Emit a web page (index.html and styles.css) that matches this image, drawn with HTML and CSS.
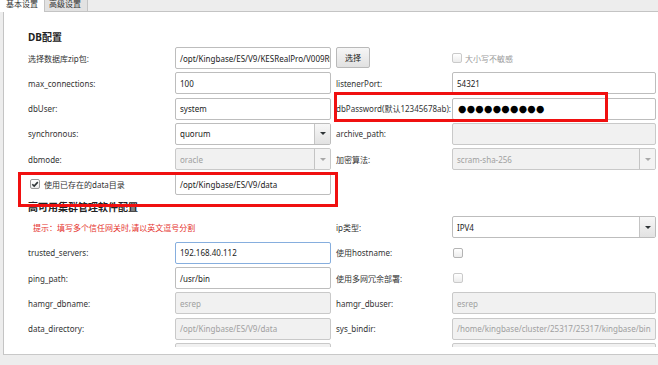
FILE: index.html
```html
<!DOCTYPE html>
<html lang="zh-CN">
<head>
<meta charset="utf-8">
<title>设置</title>
<link rel="stylesheet" href="styles.css">
</head>
<body>
<div class="window">
  <div class="tabs">
    <div class="tab active"><span>基本设置</span></div>
    <div class="tab"><span>高级设置</span></div>
    <div class="tab-fill"></div>
  </div>
  <div class="panel">
    <div class="scroll">
      <div class="section-title first">DB配置</div>
      <div class="form">
        <div class="lbl">选择数据库zip包:</div>
        <div class="field">/opt/Kingbase/ES/V9/KESRealPro/V009R001C002B0014/KingbaseES_V009R001C002B0014_Lin64_install.zip</div>
        <div class="cell2"><button class="pbtn">选择</button></div>
        <div class="chkcell disabled"><span class="chk"></span><span>大小写不敏感</span></div>

        <div class="lbl">max_connections:</div>
        <div class="field">100</div>
        <div class="lbl lbl2">listenerPort:</div>
        <div class="field">54321</div>

        <div class="lbl">dbUser:</div>
        <div class="field">system</div>
        <div class="lbl lbl2">dbPassword(默认12345678ab):</div>
        <div class="field pwd">●●●●●●●●●●</div>

        <div class="lbl">synchronous:</div>
        <div class="select"><span class="val">quorum</span><span class="arrow"></span></div>
        <div class="lbl lbl2">archive_path:</div>
        <div class="field off"></div>

        <div class="lbl">dbmode:</div>
        <div class="select off"><span class="val">oracle</span><span class="arrow"></span></div>
        <div class="lbl lbl2">加密算法:</div>
        <div class="select off"><span class="val">scram-sha-256</span><span class="arrow"></span></div>

        <div class="lbl chklbl"><span class="chk on"><svg viewBox="0 0 10 10" width="10" height="10"><path d="M2.3 5.2 L4.2 7.1 L7.8 3.1" fill="none" stroke="#2e3436" stroke-width="1.6"/></svg></span><span>使用已存在的data目录</span></div>
        <div class="field">/opt/Kingbase/ES/V9/data</div>
        <div></div>
        <div></div>
      </div>

      <div class="section-title second">高可用集群管理软件配置</div>
      <div class="form">
        <div class="hint">提示：填写多个信任网关时,请以英文逗号分割</div>
        <div class="lbl lbl2">ip类型:</div>
        <div class="select"><span class="val">IPV4</span><span class="arrow"></span></div>

        <div class="lbl">trusted_servers:</div>
        <div class="field focus">192.168.40.112</div>
        <div class="lbl lbl2">使用hostname:</div>
        <div class="chkcell"><span class="chk shift"></span></div>

        <div class="lbl">ping_path:</div>
        <div class="field">/usr/bin</div>
        <div class="lbl lbl2">使用多网冗余部署:</div>
        <div class="chkcell"><span class="chk shift faint"></span></div>

        <div class="lbl">hamgr_dbname:</div>
        <div class="field off">esrep</div>
        <div class="lbl lbl2">hamgr_dbuser:</div>
        <div class="field off">esrep</div>

        <div class="lbl">data_directory:</div>
        <div class="field off">/opt/Kingbase/ES/V9/data</div>
        <div class="lbl lbl2">sys_bindir:</div>
        <div class="field off">/home/kingbase/cluster/25317/25317/kingbase/bin</div>

        <div class="lbl">log_path:</div>
        <div class="field off"></div>
        <div class="lbl lbl2">virtual_ip:</div>
        <div class="field off"></div>
      </div>
    </div>
    <div class="mark mark-pwd"></div>
    <div class="mark mark-data"></div>
  </div>
  <div class="strip"></div>
</div>
</body>
</html>
```

FILE: styles.css
```css
* { box-sizing: border-box; }
html, body { margin: 0; padding: 0; }
body {
  width: 658px;
  height: 365px;
  overflow: hidden;
  background: #ededed;
  font-family: "Noto Sans", "Noto Sans CJK SC", sans-serif;
  font-size: 8px;
  color: #333;
}
.window { width: 658px; height: 365px; overflow: hidden; }

/* tabs */
.tabs { display: flex; height: 12px; }
.tab {
  height: 12px;
  overflow: hidden;
  white-space: nowrap;
  background: #e2e2e2;
  border: 1px solid #c4c4c4;
  border-top: none;
  border-left: none;
  color: #333;
  padding: 0 4px 0 4px;
  width: 43px;
}
.tab span { display: block; line-height: 12px; margin-top: -2px; }
.tab.active { background: #fff; border-bottom: none; width: 45px; padding-left: 6px; }
.tab-fill { flex: 1; border-bottom: 1px solid #c4c4c4; }

/* panel */
.panel {
  position: relative;
  margin-left: 3px;
  width: 700px;
  height: 343px;
  background: #fff;
  border-left: 1px solid #c4c4c4;
  border-bottom: 1px solid #c8c8c8;
}
.scroll {
  height: 335px;
  overflow: hidden;
  padding: 19px 0 0 24px;
}
.section-title {
  font-size: 10px;
  font-weight: bold;
  line-height: 12px;
  color: #222;
}
.section-title.first { margin-bottom: 4px; }
.section-title.second { margin: 6px 0 3px; }

.form {
  display: grid;
  grid-template-columns: 147px 156px 121px 204px;
  grid-auto-rows: 22px;
  row-gap: 3.3px;
}
.lbl { display: flex; align-items: center; white-space: nowrap; color: #333; }
.lbl2 { padding-left: 5px; }
.chklbl { padding-left: 2px; gap: 4px; }

.field {
  border: 1px solid #bdbdbd;
  border-radius: 2px;
  background: #fff;
  padding-left: 4px;
  display: flex;
  align-items: center;
  white-space: nowrap;
  overflow: hidden;
  color: #222;
}
.field.off { background: #f1f1f1; color: #a0a0a0; border-color: #c9c9c9; }
.field.focus { border-color: #86aede; }
.field.pwd { font-family: "DejaVu Sans", sans-serif; font-size: 9.6px; letter-spacing: 0.3px; color: #000; padding-left: 5px; }

.select {
  display: flex;
  border: 1px solid #bdbdbd;
  border-radius: 2px;
  background: #fff;
  color: #222;
  overflow: hidden;
}
.select .val { flex: 1; display: flex; align-items: center; padding-left: 4px; }
.select .arrow {
  width: 16px;
  border-left: 1px solid #c4c4c4;
  background: linear-gradient(#f7f7f7, #e2e2e2);
  display: flex;
  align-items: center;
  justify-content: center;
}
.select .arrow::after {
  content: "";
  border-left: 3px solid transparent;
  border-right: 3px solid transparent;
  border-top: 3px solid #2e3436;
}
.select.off { background: #f1f1f1; color: #a0a0a0; border-color: #c9c9c9; }
.select.off .arrow { background: #f3f3f3; }
.select.off .arrow::after { border-top-color: #a8a8a8; }

.cell2 { padding-left: 5px; }
.pbtn {
  width: 34px;
  height: 21px;
  border: 1px solid #b9b9b9;
  border-radius: 2px;
  background: linear-gradient(#f6f6f6, #e1e1e1);
  font: inherit;
  color: #222;
  padding: 0;
}

.chkcell { display: flex; align-items: center; gap: 3px; white-space: nowrap; }
.chkcell.disabled { color: #9a9a9a; }
.chk {
  width: 10px;
  height: 10px;
  border: 1px solid #b4b4b4;
  border-radius: 2px;
  background: linear-gradient(#fff, #ececec);
  display: inline-flex;
  flex: none;
}
.chk svg { margin: -1px; }
.chk.on { border-color: #9a9a9a; }
.chk.shift { margin-left: 1px; }
.chk.faint { border-color: #cacaca; }
.chkcell.disabled .chk { border-color: #cacaca; }

.hint {
  grid-column: 1 / span 2;
  display: flex;
  align-items: center;
  padding-left: 5px;
  color: #e5322d;
  white-space: nowrap;
}

/* red annotation boxes */
.mark {
  position: absolute;
  border: 3px solid #f01010;
  pointer-events: none;
}
.mark-pwd { left: 330px; top: 80px; width: 274px; height: 30px; }
.mark-data { left: 14px; top: 160px; width: 320px; height: 35px; }

.strip { height: 10px; background: #ededed; }
```
